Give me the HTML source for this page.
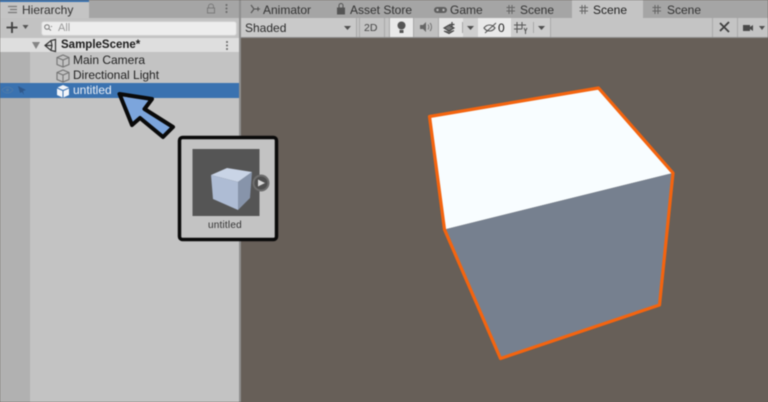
<!DOCTYPE html>
<html><head><meta charset="utf-8"><style>
html,body{margin:0;padding:0;width:768px;height:402px;overflow:hidden;background:#675f58}
body{position:relative;font-family:"Liberation Sans",sans-serif;color:#1f1f1f}
#w{position:absolute;left:0;top:0;width:768px;height:402px;filter:blur(.4px);overflow:hidden}
.a{position:absolute}
.t{position:absolute;white-space:nowrap;font-size:12px;line-height:14px;color:#2b2b2b}
svg{position:absolute;left:0;top:0}
</style></head><body><div id="w">
<!-- backgrounds -->
<div class="a" style="left:241px;top:0;width:527px;height:18px;background:#a5a5a5"></div>
<div class="a" style="left:0;top:0;width:241px;height:18px;background:#a5a5a5"></div>
<div class="a" style="left:0;top:0;width:89px;height:18px;background:#c4c4c4"></div>
<div class="a" style="left:0;top:0;width:89px;height:2px;background:#3a72b0"></div>
<div class="a" style="left:0;top:18px;width:239px;height:20px;background:#c2c2c2"></div>
<div class="a" style="left:0;top:38px;width:239px;height:364px;background:#c3c3c3"></div>
<div class="a" style="left:0;top:52px;width:30px;height:350px;background:#b1b1b1"></div>
<div class="a" style="left:0;top:38px;width:239px;height:14px;background:#dedede"></div>
<div class="a" style="left:0;top:83px;width:239px;height:15px;background:#3a72b0"></div>
<div class="a" style="left:239px;top:0;width:2px;height:402px;background:#8e8e8e"></div>
<!-- search -->
<div class="a" style="left:41px;top:21px;width:194px;height:13px;background:#ededed;border-radius:3px;border:1px solid #d0d0d0;box-sizing:content-box"></div>
<!-- scene toolbar -->
<div class="a" style="left:241px;top:18px;width:527px;height:19px;background:#c4c4c4"></div>
<div class="a" style="left:241px;top:37px;width:527px;height:1px;background:#8f8f8f"></div>
<div class="a" style="left:241px;top:18px;width:115px;height:19px;background:#c9c9c9"></div>
<div class="a" style="left:390px;top:18px;width:23px;height:19px;background:#e9e9e9"></div>
<div class="a" style="left:414px;top:18px;width:24px;height:19px;background:#c0c0c0"></div>
<div class="a" style="left:439px;top:18px;width:24px;height:19px;background:#e4e4e4"></div>
<div class="a" style="left:463px;top:18px;width:15px;height:19px;background:#cfcfcf"></div>
<div class="a" style="left:478px;top:18px;width:33px;height:19px;background:#e9e9e9"></div>
<div class="a" style="left:511px;top:18px;width:39px;height:19px;background:#cdcdcd"></div>
<div class="a" style="left:572px;top:0;width:71px;height:18px;background:#c4c4c4"></div>
<svg width="768" height="402" viewBox="0 0 768 402">
 <!-- toolbar separators -->
 <g fill="#a8a8a8">
  <rect x="356" y="18" width="1" height="19"/><rect x="359" y="18" width="1" height="19"/>
  <rect x="384" y="18" width="1" height="19"/><rect x="389" y="18" width="1" height="19"/>
  <rect x="413" y="18" width="1" height="19"/><rect x="438" y="18" width="1" height="19"/>
  <rect x="550" y="18" width="1" height="19"/><rect x="712" y="18" width="1" height="19"/>
  <rect x="737" y="18" width="1" height="19"/><rect x="462" y="22" width="1" height="11"/><rect x="533" y="22" width="1" height="11"/>
 </g>
 <!-- hamburger -->
 <path d="M8 6.500h9M10 9.500h7M8 12.500h9" stroke="#777" stroke-width="1.200" fill="none"/>
 <!-- lock -->
 <path d="M208.500 8V6.500a2.500 2.500 0 0 1 5 0V8" stroke="#7a7a7a" fill="none"/><rect x="207.500" y="8" width="7" height="5" fill="none" stroke="#7a7a7a"/>
 <g fill="#666"><circle cx="226.500" cy="5" r="1"/><circle cx="226.500" cy="8.500" r="1"/><circle cx="226.500" cy="12" r="1"/>
 <circle cx="227" cy="42" r="1"/><circle cx="227" cy="45.500" r="1"/><circle cx="227" cy="49" r="1"/></g>
 <!-- plus -->
 <path d="M12 22v11M6.500 27.500h11" stroke="#3f3f3f" stroke-width="1.800"/>
 <path d="M22.500 25h6l-3 4z" fill="#555"/>
 <!-- search icon -->
 <circle cx="47" cy="27" r="2.300" fill="none" stroke="#777"/><path d="M49 29l2 1.500M51 26.500h1" stroke="#777"/>
 <!-- tree arrow -->
 <path d="M32 42h8l-4 7z" fill="#858585"/>
 <!-- unity logo -->
 <path d="M45 45.500l6-5 4.500-1v12l-4.500-1zM45 45.500h6.500M51 40.500l1 5-1 5" fill="none" stroke="#333" stroke-width="1.200"/>
 <!-- cube outlines -->
 <g fill="none" stroke="#747474" stroke-width="1.100">
  <path d="M57 57.500l6-2.500 6 2.500v7l-6 2.500-6-2.500zM57 57.500l6 2.500 6-2.500M63 60v7"/>
  <path d="M57 72.500l6-2.500 6 2.500v7l-6 2.500-6-2.500zM57 72.500l6 2.500 6-2.500M63 75v7"/>
 </g>
 <path d="M57.500 87.500l5.500-2.500 6 2.500-6 2.500z M57 88.500l5.500 2.500v6.500l-5.500-2.500z M63.500 91l5.500-2.500v6.500l-5.500 2.500z" fill="#f2f5fa"/>
 <!-- eye & pick on selected row -->
 <path d="M2 90c3-4 8-4 11 0c-3 4-8 4-11 0z" fill="none" stroke="#4f7aa8"/><circle cx="7.500" cy="90" r="1.500" fill="#4f7aa8"/>
 <path d="M18 86l8 4-3 1 1 4-2-3-2 1z" fill="#30588a"/>
 <!-- tab icons -->
 <path d="M251 5l3 4-3 4M254 9h6M258 7v4" fill="none" stroke="#555" stroke-width="1.100"/>
 <path d="M337 7.500h8v7h-8z" fill="#555"/><path d="M339 7.500V5.500a2 2 0 0 1 4 0v2" fill="none" stroke="#555"/>
 <rect x="434" y="7" width="13" height="6" rx="3" fill="#5e5e5e"/><circle cx="437.500" cy="10" r="1.200" fill="#bbb"/><circle cx="443.500" cy="10" r="1.200" fill="#bbb"/>
 <g stroke="#666" fill="none" stroke-width="1"><path d="M509 5v9M512 5v9M506.500 7.500h8.500M506.500 11h8.500"/><path d="M582 5v9M585 5v9M579.500 7.500h8.500M579.500 11h8.500"/><path d="M655 5v9M658 5v9M652.500 7.500h8.500M652.500 11h8.500"/></g>
 <!-- dropdown arrows -->
 <path d="M344 26h7l-3.500 4z M467 26h7l-3.500 4z M538 26h7l-3.500 4z M759 26h6l-3 4z" fill="#4f4f4f"/>
 <!-- bulb -->
 <circle cx="401.500" cy="25.500" r="4" fill="#555"/><rect x="399.500" y="30" width="4" height="3" fill="#555"/>
 <!-- speaker -->
 <path d="M420 25h3l3-3v10l-3-3h-3z" fill="#666"/><path d="M428 24.500c1 1.500 1 3.500 0 5M430 23c2 2 2 6 0 8" stroke="#777" fill="none"/>
 <!-- effects -->
 <path d="M444 28l5-3 5 3-5 3zM444 31l5 2.500 5-3" fill="#777" stroke="#444" stroke-width="1.100"/><path d="M452 22v5M449.500 24.500h5" stroke="#444" stroke-width="1.200"/>
 <!-- hidden -->
 <path d="M484 28c3-4 8-4 11 0c-3 4-8 4-11 0zM485 33l11-10" fill="none" stroke="#555" stroke-width="1.100"/>
 <!-- grid icon -->
 <path d="M517 22v11M522 22v7M514 25h12M514 29h8M524 28l1.500 3 1.500-3M525.500 31v3" fill="none" stroke="#555"/>
 <!-- tools -->
 <path d="M720 23l9 9M729 22l-9 9" stroke="#3f3f3f" stroke-width="1.800"/>
 <path d="M743 25h7v6h-7zM750 27l3-2v6l-3-2z" fill="#4a4a4a"/>
 <!-- cube -->
 <polygon points="429.500,116.500 598.500,88 673,173 444.500,229.500" fill="#f8fdff"/>
 <polygon points="444.500,229.500 673,173 659.500,305 500.500,358.500" fill="#76808f"/>
 <polygon points="429.500,116.500 598.500,88 673,173 659.500,305 500.500,358.500 444.500,229.500" fill="none" stroke="#f4640f" stroke-width="3.200" stroke-linejoin="round"/>
 <!-- arrow -->
 <polygon points="119.500,94 152,99 144.500,109 173,127 163,137 140,118 132,125" fill="#7ca5dc" stroke="#0a0a0a" stroke-width="4" stroke-linejoin="round"/>
 <!-- thumbnail card -->
 <rect x="179.500" y="137.500" width="97" height="102" rx="3" fill="#c3c3c3" stroke="#0a0a0a" stroke-width="3.500"/>
 <rect x="192.500" y="149" width="67" height="67" fill="#555555"/>
 <circle cx="261" cy="183" r="8.500" fill="#6d6d6d"/>
 <circle cx="261" cy="183" r="6.500" fill="#4f4f4f"/>
 <path d="M258 179.500l7 3.500-7 3.500z" fill="#d8d8d8"/>
 <polygon points="211,175 227,168 252,172 238,182" fill="#c9d4e6"/>
 <polygon points="211,175 238,182 238,210 213,199" fill="#aebcd4"/>
 <polygon points="238,182 252,172 250,198 238,210" fill="#8794aa"/>
</svg>
<!-- text -->
<div class="t" style="left:22px;top:3px;color:#333">Hierarchy</div>
<div class="t" style="left:263px;top:3px;color:#333">Animator</div>
<div class="t" style="left:350px;top:3px;color:#333">Asset Store</div>
<div class="t" style="left:450px;top:3px;color:#333">Game</div>
<div class="t" style="left:520px;top:3px;color:#333">Scene</div>
<div class="t" style="left:593px;top:3px;color:#222">Scene</div>
<div class="t" style="left:667px;top:3px;color:#333">Scene</div>
<div class="t" style="left:245px;top:21px;color:#2a2a2a">Shaded</div>
<div class="t" style="left:364px;top:21px;font-size:10.500px;color:#444">2D</div>
<div class="t" style="left:498px;top:21px;color:#222">0</div>
<div class="t" style="left:58px;top:21px;font-size:11px;color:#999">All</div>
<div class="t" style="left:61px;top:38px;font-weight:bold;font-size:11.500px;color:#1c1c1c">SampleScene*</div>
<div class="t" style="left:73px;top:53px;color:#222">Main Camera</div>
<div class="t" style="left:73px;top:68px;color:#222">Directional Light</div>
<div class="t" style="left:73px;top:83px;color:#e9eef6">untitled</div>
<div class="t" style="left:208px;top:220px;font-size:10px;line-height:12px;color:#333;letter-spacing:.2px">untitled</div>
</div></body></html>
